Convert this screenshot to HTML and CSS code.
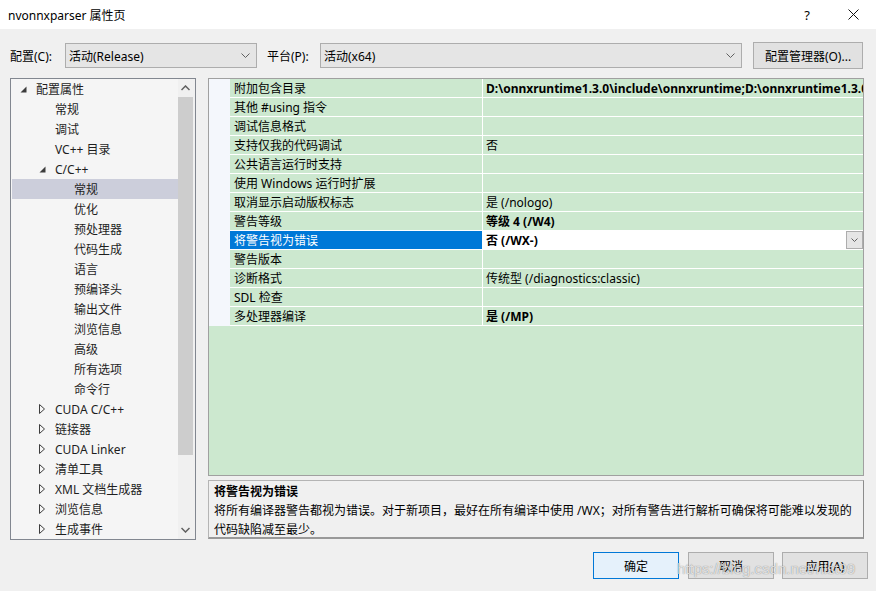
FILE: index.html
```html
<!DOCTYPE html>
<html lang="zh-CN">
<head>
  <meta charset="UTF-8">
  <title>nvonnxparser 属性页</title>
  <link rel="stylesheet" href="styles.css">
</head>
<body>
<div class="dialog">

  <!-- Barra de título -->
  <div class="titlebar">
    <span class="title">nvonnxparser 属性页</span>
    <div class="caption">
      <span class="cap-btn">?</span>
      <span class="cap-btn">
        <svg width="11" height="11" viewBox="0 0 11 11"><path d="M0.5 0.5L10.5 10.5M10.5 0.5L0.5 10.5" stroke="#111" stroke-width="1"/></svg>
      </span>
    </div>
  </div>

  <!-- Configuración / plataforma -->
  <div class="config-row">
    <span class="lbl lbl-config">配置(C):</span>
    <div class="combo combo-config">
      <span>活动(Release)</span>
      <svg class="chev" width="9" height="5" viewBox="0 0 9 5"><path d="M0.5 0.5L4.5 4.5L8.5 0.5" stroke="#606060" fill="none"/></svg>
    </div>
    <span class="lbl lbl-platform">平台(P):</span>
    <div class="combo combo-platform">
      <span>活动(x64)</span>
      <svg class="chev" width="9" height="5" viewBox="0 0 9 5"><path d="M0.5 0.5L4.5 4.5L8.5 0.5" stroke="#606060" fill="none"/></svg>
    </div>
    <div class="btn btn-manager">配置管理器(O)...</div>
  </div>

  <div class="content">

    <!-- Árbol -->
    <div class="tree">
      <ul class="tree-list">
        <li class="tree-item lv1"><span class="exp"><svg width="7" height="7" viewBox="0 0 7 7"><path d="M6.5 0.5V6.5H0.5Z" fill="#3c3c3c"/></svg></span>配置属性</li>
        <li class="tree-item lv2"><span class="exp"></span>常规</li>
        <li class="tree-item lv2"><span class="exp"></span>调试</li>
        <li class="tree-item lv2"><span class="exp"></span>VC++ 目录</li>
        <li class="tree-item lv2"><span class="exp"><svg width="7" height="7" viewBox="0 0 7 7"><path d="M6.5 0.5V6.5H0.5Z" fill="#3c3c3c"/></svg></span>C/C++</li>
        <li class="tree-item lv3 selected"><span class="exp"></span>常规</li>
        <li class="tree-item lv3"><span class="exp"></span>优化</li>
        <li class="tree-item lv3"><span class="exp"></span>预处理器</li>
        <li class="tree-item lv3"><span class="exp"></span>代码生成</li>
        <li class="tree-item lv3"><span class="exp"></span>语言</li>
        <li class="tree-item lv3"><span class="exp"></span>预编译头</li>
        <li class="tree-item lv3"><span class="exp"></span>输出文件</li>
        <li class="tree-item lv3"><span class="exp"></span>浏览信息</li>
        <li class="tree-item lv3"><span class="exp"></span>高级</li>
        <li class="tree-item lv3"><span class="exp"></span>所有选项</li>
        <li class="tree-item lv3"><span class="exp"></span>命令行</li>
        <li class="tree-item lv2"><span class="exp"><svg width="6" height="10" viewBox="0 0 6 10"><path d="M0.5 0.5L5.5 5L0.5 9.5Z" fill="none" stroke="#3c3c3c"/></svg></span>CUDA C/C++</li>
        <li class="tree-item lv2"><span class="exp"><svg width="6" height="10" viewBox="0 0 6 10"><path d="M0.5 0.5L5.5 5L0.5 9.5Z" fill="none" stroke="#3c3c3c"/></svg></span>链接器</li>
        <li class="tree-item lv2"><span class="exp"><svg width="6" height="10" viewBox="0 0 6 10"><path d="M0.5 0.5L5.5 5L0.5 9.5Z" fill="none" stroke="#3c3c3c"/></svg></span>CUDA Linker</li>
        <li class="tree-item lv2"><span class="exp"><svg width="6" height="10" viewBox="0 0 6 10"><path d="M0.5 0.5L5.5 5L0.5 9.5Z" fill="none" stroke="#3c3c3c"/></svg></span>清单工具</li>
        <li class="tree-item lv2"><span class="exp"><svg width="6" height="10" viewBox="0 0 6 10"><path d="M0.5 0.5L5.5 5L0.5 9.5Z" fill="none" stroke="#3c3c3c"/></svg></span>XML 文档生成器</li>
        <li class="tree-item lv2"><span class="exp"><svg width="6" height="10" viewBox="0 0 6 10"><path d="M0.5 0.5L5.5 5L0.5 9.5Z" fill="none" stroke="#3c3c3c"/></svg></span>浏览信息</li>
        <li class="tree-item lv2"><span class="exp"><svg width="6" height="10" viewBox="0 0 6 10"><path d="M0.5 0.5L5.5 5L0.5 9.5Z" fill="none" stroke="#3c3c3c"/></svg></span>生成事件</li>
      </ul>
      <div class="vscroll">
        <div class="sb-arrow"><svg width="9" height="6" viewBox="0 0 9 6"><path d="M0.5 5L4.5 1L8.5 5" stroke="#606060" stroke-width="1.5" fill="none"/></svg></div>
        <div class="sb-track"><div class="sb-thumb"></div></div>
        <div class="sb-arrow"><svg width="9" height="6" viewBox="0 0 9 6"><path d="M0.5 1L4.5 5L8.5 1" stroke="#606060" stroke-width="1.5" fill="none"/></svg></div>
      </div>
    </div>

    <div class="right-col">
      <!-- Cuadrícula de propiedades -->
      <div class="grid">
        <div class="grid-row"><span class="gutter"></span><span class="name">附加包含目录</span><span class="val bold">D:\onnxruntime1.3.0\include\onnxruntime;D:\onnxruntime1.3.0\include</span></div>
        <div class="grid-row"><span class="gutter"></span><span class="name">其他 #using 指令</span><span class="val"></span></div>
        <div class="grid-row"><span class="gutter"></span><span class="name">调试信息格式</span><span class="val"></span></div>
        <div class="grid-row"><span class="gutter"></span><span class="name">支持仅我的代码调试</span><span class="val">否</span></div>
        <div class="grid-row"><span class="gutter"></span><span class="name">公共语言运行时支持</span><span class="val"></span></div>
        <div class="grid-row"><span class="gutter"></span><span class="name">使用 Windows 运行时扩展</span><span class="val"></span></div>
        <div class="grid-row"><span class="gutter"></span><span class="name">取消显示启动版权标志</span><span class="val">是 (/nologo)</span></div>
        <div class="grid-row"><span class="gutter"></span><span class="name">警告等级</span><span class="val bold">等级 4 (/W4)</span></div>
        <div class="grid-row active"><span class="gutter"></span><span class="name">将警告视为错误</span><span class="val bold"><span class="val-text">否 (/WX-)</span><span class="drop"><svg width="7" height="4" viewBox="0 0 7 4"><path d="M0.5 0.5L3.5 3.5L6.5 0.5" stroke="#606060" fill="none"/></svg></span></span></div>
        <div class="grid-row"><span class="gutter"></span><span class="name">警告版本</span><span class="val"></span></div>
        <div class="grid-row"><span class="gutter"></span><span class="name">诊断格式</span><span class="val">传统型 (/diagnostics:classic)</span></div>
        <div class="grid-row"><span class="gutter"></span><span class="name">SDL 检查</span><span class="val"></span></div>
        <div class="grid-row"><span class="gutter"></span><span class="name">多处理器编译</span><span class="val bold">是 (/MP)</span></div>
      </div>

      <!-- Descripción -->
      <div class="desc">
        <div class="desc-title">将警告视为错误</div>
        <div class="desc-text">将所有编译器警告都视为错误。对于新项目，最好在所有编译中使用 /WX；对所有警告进行解析可确保将可能难以发现的代码缺陷减至最少。</div>
      </div>
    </div>
  </div>

  <div class="buttons">
    <div class="btn btn-ok">确定</div>
    <div class="btn">取消</div>
    <div class="btn btn-apply">应用(A)</div>
  </div>

  <div class="watermark">https://blog.csdn.net/hlst99</div>
</div>
</body>
</html>
```

FILE: styles.css
```css
body {
  margin: 0;
  padding: 0;
  background-color: #f0f0f0;
  font-family: "Noto Sans", "Noto Sans CJK SC", sans-serif;
  font-size: 12px;
  color: #000;
}

.dialog {
  position: relative;
  width: 876px;
  height: 591px;
  overflow: hidden;
}

/* Title bar */
.titlebar {
  height: 29px;
  background: #fff;
  display: flex;
  align-items: center;
  justify-content: space-between;
}

.title {
  padding-left: 8px;
  font-size: 12px;
}

.caption {
  display: flex;
  height: 29px;
}

.cap-btn {
  width: 46px;
  height: 29px;
  display: flex;
  align-items: center;
  justify-content: center;
  font-size: 13px;
}

/* Config row */
.config-row {
  display: flex;
  align-items: center;
  height: 27px;
  margin-top: 13px;
  padding-left: 10px;
}

.lbl-config {
  width: 55px;
}

.lbl-platform {
  width: 53px;
  margin-left: 10px;
}

.combo {
  height: 25px;
  box-sizing: border-box;
  border: 1px solid #adadad;
  background: #e5e5e5;
  display: flex;
  align-items: center;
  justify-content: space-between;
  padding: 0 6px 0 3px;
}

.combo-config {
  width: 192px;
}

.combo-platform {
  width: 422px;
}

.btn {
  height: 27px;
  box-sizing: border-box;
  border: 1px solid #adadad;
  background: #e1e1e1;
  display: flex;
  align-items: center;
  justify-content: center;
  width: 86px;
}

.btn-manager {
  width: 110px;
  margin-left: 11px;
}

/* Main content */
.content {
  display: flex;
  margin-top: 9px;
  padding-left: 10px;
  height: 462px;
}

.tree {
  width: 186px;
  height: 462px;
  box-sizing: border-box;
  border: 1px solid #828790;
  background: #f5f5f5;
  display: flex;
}

.tree-list {
  flex: 1;
  margin: 0;
  padding: 0;
  list-style: none;
  overflow: hidden;
}

.tree-item {
  height: 20px;
  display: flex;
  align-items: center;
  white-space: nowrap;
  color: #1e1e1e;
}

.tree-item.lv1 { padding-left: 6px; }
.tree-item.lv2 { padding-left: 25px; }
.tree-item.lv3 { padding-left: 44px; }

.tree-item.selected {
  background: #cccedb;
  margin-left: 1px;
  padding-left: 43px;
}

.exp {
  width: 19px;
  height: 20px;
  display: flex;
  align-items: center;
  padding-left: 3px;
  box-sizing: border-box;
}

.vscroll {
  width: 17px;
  display: flex;
  flex-direction: column;
  background: #f0f0f0;
}

.sb-arrow {
  height: 18px;
  display: flex;
  align-items: center;
  justify-content: center;
  padding-right: 2px;
}

.sb-track {
  flex: 1;
}

.sb-thumb {
  width: 15px;
  height: 358px;
  background: #cdcdcd;
}

.right-col {
  margin-left: 12px;
  width: 656px;
  display: flex;
  flex-direction: column;
}

/* Property grid */
.grid {
  height: 398px;
  box-sizing: border-box;
  border: 1px solid #a0a0a0;
  background: #cce8cf;
  overflow: hidden;
}

.grid-row {
  display: flex;
  height: 19px;
}

.gutter {
  width: 21px;
  background: #f4f7fc;
}

.name {
  width: 253px;
  box-sizing: border-box;
  border-bottom: 1px solid #fff;
  border-right: 1px solid #fff;
  padding-left: 4px;
  line-height: 20px;
  white-space: nowrap;
  overflow: hidden;
}

.val {
  flex: 1;
  min-width: 0;
  box-sizing: border-box;
  border-bottom: 1px solid #fff;
  padding-left: 3px;
  line-height: 20px;
  white-space: nowrap;
  overflow: hidden;
}

.bold {
  font-weight: bold;
}

.grid-row.active .name {
  background: #0078d7;
  color: #fff;
}

.grid-row.active .val {
  background: #fff;
  display: flex;
  justify-content: space-between;
  padding-right: 0;
}

.drop {
  width: 17px;
  height: 18px;
  box-sizing: border-box;
  border: 1px solid #adadad;
  background: #e5e5e5;
  display: flex;
  align-items: center;
  justify-content: center;
}

/* Description */
.desc {
  margin-top: 4px;
  height: 59px;
  box-sizing: border-box;
  border: 1px solid #b4b4b4;
  border-right-color: #8c8c8c;
  border-bottom: 2px solid #999;
  padding: 1px 5px 0;
  line-height: 19px;
}

.desc-title {
  font-weight: bold;
}

/* Bottom buttons */
.buttons {
  display: flex;
  justify-content: flex-end;
  margin-top: 12px;
  padding-right: 8px;
  gap: 9px;
}

.btn-ok {
  border-color: #0078d7;
  background: #e5f1fb;
}

.btn-apply {
  margin-left: -1px;
}

.watermark {
  position: absolute;
  left: 677px;
  top: 560px;
  font-family: "Liberation Sans", sans-serif;
  font-size: 15px;
  color: rgba(255, 255, 255, 0.75);
  text-shadow: 0 0 1px rgba(0, 0, 0, 0.5);
  pointer-events: none;
}
```
